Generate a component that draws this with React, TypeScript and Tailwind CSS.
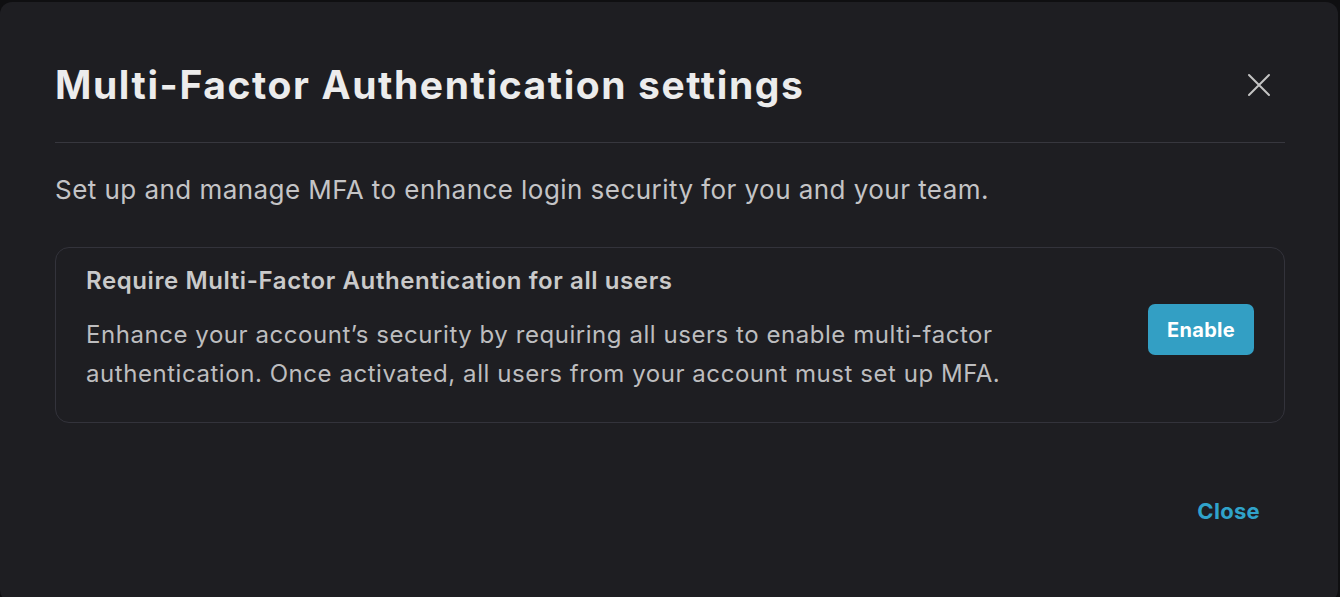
import React from "react";

const App: React.FC = () => {
  return (
    <div className="w-[1340px] h-[597px] bg-[#0f0f11] pt-[2px] pl-0 pr-[2px] overflow-hidden" style={{ fontFamily: "Inter, 'Noto Sans', sans-serif" }}>
      <div className="h-[600px] bg-[#1e1e22] rounded-[12px] pl-[55px] pr-[53px] flex flex-col">
        {/* header */}
        <div className="flex items-center justify-between pt-[60px] pb-[34px] border-b border-[#37373e]">
          <h1 className="text-[39px] leading-[46px] font-bold text-[#ececec] tracking-[1.6px]">
            Multi-Factor Authentication settings
          </h1>
          <button className="mr-[14px] text-[#c4c4c4]" aria-label="close">
            <svg width="24" height="24" viewBox="0 0 24 24" fill="none" stroke="currentColor" strokeWidth="2" strokeLinecap="round">
              <path d="M2 2L22 22M22 2L2 22" />
            </svg>
          </button>
        </div>

        <p className="mt-[31px] text-[26px] leading-[32px] text-[#c4c4c6] tracking-[0.45px]">
          Set up and manage MFA to enhance login security for you and your team.
        </p>

        {/* card */}
        <div className="mt-[41px] border border-[#33333b] rounded-[14px] pl-[30px] pr-[30px] pt-[18px] pb-[29px] flex items-start justify-between">
          <div className="flex flex-col">
            <h2 className="text-[24px] leading-[30px] font-semibold text-[#cacaca] tracking-[0.6px]">
              Require Multi-Factor Authentication for all users
            </h2>
            <p className="mt-[19px] text-[24px] leading-[39px] text-[#bdbdbf] tracking-[0.55px]">
              Enhance your account’s security by requiring all users to enable multi-factor
              <br />
              authentication. Once activated, all users from your account must set up MFA.
            </p>
          </div>
          <button className="mt-[38px] w-[106px] h-[51px] bg-[#339fc4] rounded-[7px] text-white text-[20px] font-bold tracking-[0.3px]">
            Enable
          </button>
        </div>

        <div className="flex justify-end mt-[72px] pr-[25px]">
          <button className="text-[22px] font-bold text-[#30a3ca] tracking-[0.3px]">Close</button>
        </div>
      </div>
    </div>
  );
};

export default App;
